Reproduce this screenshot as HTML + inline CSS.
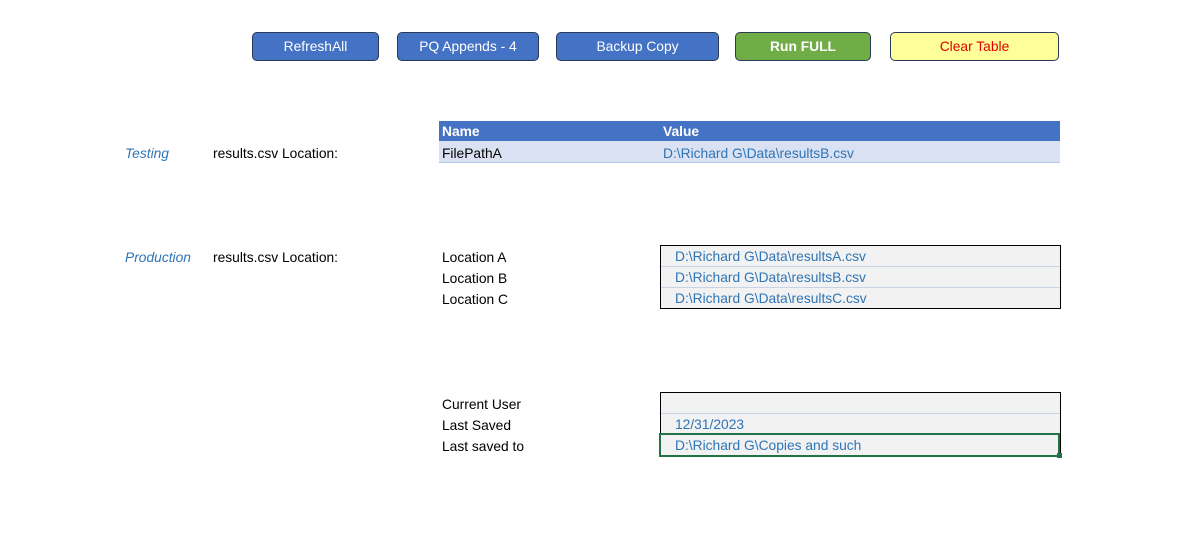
<!DOCTYPE html><html><head><style>
body{margin:0;width:1200px;height:558px;background:#fff;position:relative;font-family:"Liberation Sans",Arial,sans-serif;font-size:13.8px;color:#000;overflow:hidden}
.a{position:absolute;white-space:nowrap}
.b{position:absolute;top:32px;height:27px;border:1.5px solid #2a3a55;border-radius:5px;background:#4472C4;color:#fff;text-align:center;line-height:28px;font-size:13.8px;box-sizing:content-box}
.bl{color:#2E75B6}
.box{position:absolute;left:660px;width:399px;border:1px solid #000;background:#F2F2F2}
.box div{height:20px;border-bottom:1px solid #C9D3E6;line-height:22px;padding-left:14px;color:#2E75B6}
.box div:last-child{border-bottom:none}
</style></head><body>
<div class="b" style="left:252px;width:125px">RefreshAll</div>
<div class="b" style="left:397px;width:140px">PQ Appends - 4</div>
<div class="b" style="left:556px;width:161px">Backup Copy</div>
<div class="b" style="left:735px;width:134px;background:#70AD47;font-weight:bold">Run FULL</div>
<div class="b" style="left:890px;width:167px;background:#FFFF99;color:#E00000">Clear Table</div>

<div class="a" style="left:439px;top:121px;width:621px;height:20px;background:#4472C4"></div>
<div class="a" style="left:439px;top:141px;width:621px;height:21px;background:#D9E1F2;border-bottom:1px solid #B4C6E7"></div>
<div class="a" style="left:442px;top:124px;color:#fff;font-weight:bold">Name</div>
<div class="a" style="left:663px;top:124px;color:#fff;font-weight:bold">Value</div>
<div class="a" style="left:442px;top:146px">FilePathA</div>
<div class="a bl" style="left:663px;top:146px">D:\Richard G\Data\resultsB.csv</div>

<div class="a bl" style="left:125px;top:146px;font-style:italic">Testing</div>
<div class="a" style="left:213px;top:146px">results.csv Location:</div>
<div class="a bl" style="left:125px;top:250px;font-style:italic">Production</div>
<div class="a" style="left:213px;top:250px">results.csv Location:</div>

<div class="a" style="left:442px;top:250px">Location A</div>
<div class="a" style="left:442px;top:271px">Location B</div>
<div class="a" style="left:442px;top:292px">Location C</div>
<div class="box" style="top:245px"><div>D:\Richard G\Data\resultsA.csv</div><div>D:\Richard G\Data\resultsB.csv</div><div>D:\Richard G\Data\resultsC.csv</div></div>

<div class="a" style="left:442px;top:397px">Current User</div>
<div class="a" style="left:442px;top:418px">Last Saved</div>
<div class="a" style="left:442px;top:439px">Last saved to</div>
<div class="box" style="top:392px"><div></div><div>12/31/2023</div><div></div></div>
<div class="a bl" style="left:659px;top:433px;height:20px;border:2px solid #217346;line-height:21px;padding-left:14px;box-sizing:content-box;width:383px;background:#F2F2F2">D:\Richard G\Copies and such</div>
<div class="a" style="left:1057px;top:453px;width:5px;height:5px;background:#217346"></div>
</body></html>
